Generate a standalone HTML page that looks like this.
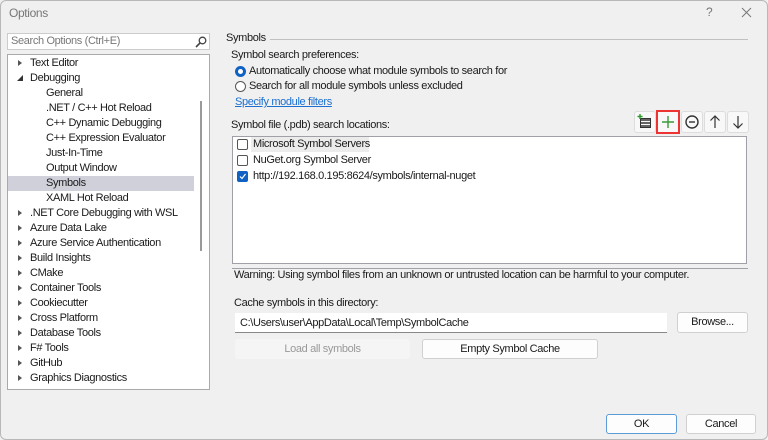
<!DOCTYPE html>
<html><head><meta charset="utf-8"><style>
*{box-sizing:border-box;margin:0;padding:0}
body{width:768px;height:440px;background:#f0f0f0;font-family:"Liberation Sans",sans-serif;font-size:11px;letter-spacing:-0.35px;color:#1a1a1a;position:relative;overflow:hidden}
.a{position:absolute;white-space:nowrap}
.btn{position:absolute;background:#fdfdfd;border:1px solid #d0d0d0;border-radius:3px;text-align:center}
.tri{display:inline-block;width:0;height:0;border-left:4px solid #555;border-top:3.5px solid transparent;border-bottom:3.5px solid transparent;position:absolute;left:10px;top:4px}
.tri.o{border:none;border-right:6px solid #333;border-top:6px solid transparent;left:9px;top:4px;width:0}
.row{position:absolute;left:0;height:15px;line-height:15px;width:186px}
.cb{position:absolute;width:11px;height:11px;border:1px solid #555;border-radius:2px;background:#fff}
.tb{position:absolute;top:111px;width:22px;height:22px;background:#f8f8f8;border:1px solid #ddd;border-radius:3px}
</style></head><body>
<div class="a" style="left:0;top:0;width:768px;height:440px;border:1px solid #b8b8b8;border-radius:6px"></div>
<div class="a" style="left:9px;top:6px;font-size:12px;color:#777">Options</div>
<div class="a" style="left:706px;top:5px;font-size:12px;color:#777">?</div>
<svg class="a" style="left:741px;top:7px" width="11" height="11"><path d="M1 1L10 10M10 1L1 10" stroke="#777" stroke-width="1"/></svg>

<div class="a" style="left:7px;top:33px;width:203px;height:17px;background:#fff;border:1px solid #ccc"></div>
<div class="a" style="left:11px;top:35px;font-size:11px;color:#777">Search Options (Ctrl+E)</div>
<svg class="a" style="left:195px;top:36px" width="12" height="12"><circle cx="7.5" cy="4.5" r="3.3" fill="none" stroke="#444" stroke-width="1.3"/><path d="M5 7L1 11" stroke="#444" stroke-width="1.6"/></svg>

<div class="a" style="left:7px;top:54px;width:203px;height:336px;background:#fff;border:1px solid #aaa">
<div class="a" style="left:192px;top:46px;width:2px;height:150px;background:#9a9a9a"></div>
<div class="a" style="left:0;top:1px;width:194px">
<div class="row" style="top:0"><span class="tri"></span><span style="position:absolute;left:22px">Text Editor</span></div>
<div class="row" style="top:15px"><span class="tri o"></span><span style="position:absolute;left:22px">Debugging</span></div>
<div class="row" style="top:30px"><span style="position:absolute;left:38px">General</span></div>
<div class="row" style="top:45px"><span style="position:absolute;left:38px">.NET / C++ Hot Reload</span></div>
<div class="row" style="top:60px"><span style="position:absolute;left:38px">C++ Dynamic Debugging</span></div>
<div class="row" style="top:75px"><span style="position:absolute;left:38px">C++ Expression Evaluator</span></div>
<div class="row" style="top:90px"><span style="position:absolute;left:38px">Just-In-Time</span></div>
<div class="row" style="top:105px"><span style="position:absolute;left:38px">Output Window</span></div>
<div class="row" style="top:120px;background:#cfd0da"><span style="position:absolute;left:38px">Symbols</span></div>
<div class="row" style="top:135px"><span style="position:absolute;left:38px">XAML Hot Reload</span></div>
<div class="row" style="top:150px"><span class="tri"></span><span style="position:absolute;left:22px">.NET Core Debugging with WSL</span></div>
<div class="row" style="top:165px"><span class="tri"></span><span style="position:absolute;left:22px">Azure Data Lake</span></div>
<div class="row" style="top:180px"><span class="tri"></span><span style="position:absolute;left:22px">Azure Service Authentication</span></div>
<div class="row" style="top:195px"><span class="tri"></span><span style="position:absolute;left:22px">Build Insights</span></div>
<div class="row" style="top:210px"><span class="tri"></span><span style="position:absolute;left:22px">CMake</span></div>
<div class="row" style="top:225px"><span class="tri"></span><span style="position:absolute;left:22px">Container Tools</span></div>
<div class="row" style="top:240px"><span class="tri"></span><span style="position:absolute;left:22px">Cookiecutter</span></div>
<div class="row" style="top:255px"><span class="tri"></span><span style="position:absolute;left:22px">Cross Platform</span></div>
<div class="row" style="top:270px"><span class="tri"></span><span style="position:absolute;left:22px">Database Tools</span></div>
<div class="row" style="top:285px"><span class="tri"></span><span style="position:absolute;left:22px">F# Tools</span></div>
<div class="row" style="top:300px"><span class="tri"></span><span style="position:absolute;left:22px">GitHub</span></div>
<div class="row" style="top:315px"><span class="tri"></span><span style="position:absolute;left:22px">Graphics Diagnostics</span></div>
</div></div>

<div class="a" style="left:226px;top:32px">Symbols</div>
<div class="a" style="left:270px;top:39px;width:478px;height:1px;background:#c0c0c0"></div>
<div class="a" style="left:231px;top:49px">Symbol search preferences:</div>
<div class="a" style="left:235px;top:66px;width:11px;height:11px;border-radius:50%;background:#0f62c4"><div style="position:absolute;left:3px;top:3px;width:5px;height:5px;border-radius:50%;background:#fff"></div></div>
<div class="a" style="left:249px;top:65px">Automatically choose what module symbols to search for</div>
<div class="a" style="left:235px;top:81px;width:11px;height:11px;border-radius:50%;border:1px solid #555;background:#fff"></div>
<div class="a" style="left:249px;top:80px">Search for all module symbols unless excluded</div>
<div class="a" style="left:235px;top:96px;color:#1a6fd0;text-decoration:underline">Specify module filters</div>
<div class="a" style="left:231px;top:119px">Symbol file (.pdb) search locations:</div>

<div class="tb" style="left:634px"><svg width="20" height="20"><path d="M6 8h9M6 11h9M6 14h9" stroke="#333" stroke-width="1.5"/><rect x="5.5" y="6.5" width="10" height="9" fill="none" stroke="#333"/><path d="M5 2v5M2.5 4.5h5" stroke="#2a9a2a" stroke-width="1.4"/></svg></div>
<div class="tb" style="left:656px;width:24px;top:110px;height:24px;border:2px solid #e33;border-radius:0"><svg width="20" height="20"><path d="M10 4v12M4 10h12" stroke="#3a9a3a" stroke-width="1.4"/></svg></div>
<div class="tb" style="left:681px"><svg width="20" height="20"><circle cx="10" cy="10" r="6" fill="none" stroke="#333" stroke-width="1.4"/><path d="M7 10h6" stroke="#333" stroke-width="1.4"/></svg></div>
<div class="tb" style="left:704px"><svg width="20" height="20"><path d="M10 4v12M5.5 8.5L10 4l4.5 4.5" fill="none" stroke="#333" stroke-width="1.2"/></svg></div>
<div class="tb" style="left:727px"><svg width="20" height="20"><path d="M10 4v12M5.5 11.5L10 16l4.5-4.5" fill="none" stroke="#333" stroke-width="1.2"/></svg></div>

<div class="a" style="left:232px;top:136px;width:515px;height:128px;background:#fff;border:1px solid #a0a0a8"></div>
<div class="a" style="left:251px;top:137px;width:118px;height:15px;background:#ececec"></div>
<div class="cb" style="left:237px;top:139px"></div><div class="a" style="left:253px;top:138px">Microsoft Symbol Servers</div>
<div class="cb" style="left:237px;top:155px"></div><div class="a" style="left:253px;top:154px">NuGet.org Symbol Server</div>
<div class="cb" style="left:237px;top:171px;background:#0f62c4;border-color:#0f62c4"><svg width="9" height="9" style="position:absolute;left:0;top:0"><path d="M2 4.5l2 2L7.5 2" fill="none" stroke="#fff" stroke-width="1.2"/></svg></div><div class="a" style="left:253px;top:170px">http://192.168.0.195:8624/symbols/internal-nuget</div>
<div class="a" style="left:232px;top:268px;width:516px;height:1px;background:#a0a0a8"></div>
<div class="a" style="left:234px;top:269px">Warning: Using symbol files from an unknown or untrusted location can be harmful to your computer.</div>
<div class="a" style="left:234px;top:297px">Cache symbols in this directory:</div>
<div class="a" style="left:235px;top:313px;width:432px;height:20px;background:#fff;border-bottom:1px solid #888"></div>
<div class="a" style="left:240px;top:317px">C:\Users\user\AppData\Local\Temp\SymbolCache</div>
<div class="btn" style="left:677px;top:312px;width:71px;height:21px;line-height:19px">Browse...</div>
<div class="a" style="left:235px;top:339px;width:175px;height:20px;background:#f5f5f5;border-radius:3px;color:#999;text-align:center;line-height:20px">Load all symbols</div>
<div class="btn" style="left:422px;top:339px;width:176px;height:20px;line-height:18px">Empty Symbol Cache</div>
<div class="btn" style="left:606px;top:414px;width:71px;height:20px;line-height:18px;border-color:#5a9bd8">OK</div>
<div class="btn" style="left:686px;top:414px;width:70px;height:20px;line-height:18px">Cancel</div>
</body></html>
